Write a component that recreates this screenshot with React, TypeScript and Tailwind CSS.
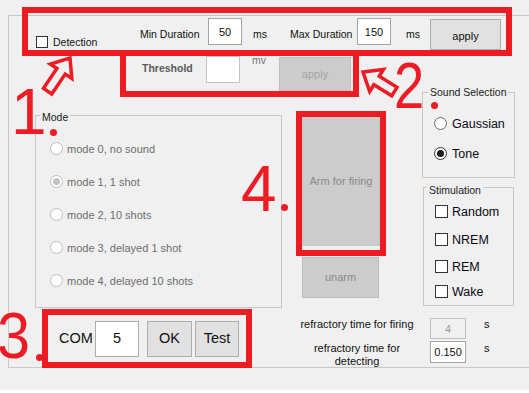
import { FC, ReactNode } from "react";

const RED = "bg-[#ed1c24]";

const Panel: FC<{ label: string; labelTop: string; labelLeft: string; className: string; children: ReactNode }> = ({ label, labelTop, labelLeft, className, children }) => (
    <div className={`relative border border-[#c6c6c6] ${className}`}>
        <span className={`absolute ${labelTop} ${labelLeft} px-[2px] bg-[#f0f0f0] text-[10.5px] leading-[12px] text-[#1a1a1a]`}>{label}</span>
        {children}
    </div>
);

const ModeRadio: FC<{ text: string; checked?: boolean }> = ({ text, checked }) => (
    <div className="flex items-center gap-[4px] h-[13px]">
        <span className="w-[13px] h-[13px] rounded-full border border-[#bcbcbc] bg-white flex items-center justify-center">
            {checked && <span className="w-[7px] h-[7px] rounded-full bg-[#c2c2c2]" />}
        </span>
        <span className="text-[11px] leading-[12px] text-[#6d6d6d]">{text}</span>
    </div>
);

const Check: FC<{ text: string; className?: string }> = ({ text, className }) => (
    <div className={`flex items-center gap-[4px] h-[13px] ${className ?? ""}`}>
        <span className="w-[13px] h-[13px] border border-[#333] bg-white" />
        <span className="text-[12.5px] leading-[14px] text-[#0a0a14]">{text}</span>
    </div>
);

export default function App() {
    return (
        <div className="w-[529px] h-[393px] bg-white overflow-hidden relative font-['Liberation_Sans',Arial,sans-serif]">
            <div className="h-[390px] bg-[#f0f0f0] pl-[8px] pt-[15px]">
                <div className="w-[530px] h-[353px] border border-r-0 border-[#c8c8c8] overflow-hidden">
                    {/* top row */}
                    <div className="flex items-start h-[34px] text-[10.5px] leading-[12px] text-[#111]">
                        <div className="ml-[27px] mt-[20px] w-[104px] flex items-center gap-[5px]">
                            <span className="w-[12px] h-[12px] border border-[#333] bg-white" />
                            <span>Detection</span>
                        </div>
                        <span className="mt-[12px] w-[68px]">Min Duration</span>
                        <div className="mt-[2px] w-[34px] h-[27px] border border-[#a5a5a5] bg-white flex items-center justify-center text-[11px]">50</div>
                        <span className="mt-[12px] ml-[11px] w-[37px]">ms</span>
                        <span className="mt-[12px] w-[67px]">Max Duration</span>
                        <div className="mt-[2px] w-[34px] h-[27px] border border-[#a5a5a5] bg-white flex items-center justify-center text-[11px]">150</div>
                        <span className="mt-[12px] ml-[15px] w-[24px]">ms</span>
                        <div className="mt-[3px] w-[71px] h-[31px] bg-[#e1e1e1] border border-[#adadad] flex items-center justify-center pt-[3px] text-[11px]">apply</div>
                    </div>

                    {/* threshold row */}
                    <div className="flex items-start h-[41px]">
                        <span className="ml-[133px] mt-[12px] w-[64px] text-[10.5px] leading-[12px] font-bold text-[#5a5a5a]">Threshold</span>
                        <div className="mt-[6px] w-[34px] h-[27px] border border-[#c4c4c4] bg-white" />
                        <span className="ml-[12px] mt-[4px] w-[27px] text-[10.5px] leading-[12px] text-[#777]">mv</span>
                        <div className="mt-[7px] w-[72px] h-[34px] bg-[#cccccc] border border-[#bfbfbf] flex items-center justify-center text-[11px] text-[#a3a3a3]">apply</div>
                    </div>

                    {/* body */}
                    <div className="flex items-start">
                        <div className="ml-[26px] mt-[24px] w-[247px]">
                            <Panel label="Mode" labelTop="-top-[5px]" labelLeft="left-[4px]" className="h-[193px]">
                                <div className="pt-[26px] pl-[14px] flex flex-col gap-[20px]">
                                    <ModeRadio text="mode 0, no sound" />
                                    <ModeRadio text="mode 1, 1 shot" checked />
                                    <ModeRadio text="mode 2, 10 shots" />
                                    <ModeRadio text="mode 3, delayed 1 shot" />
                                    <ModeRadio text="mode 4, delayed 10 shots" />
                                </div>
                            </Panel>
                            <div className="mt-[13px] pl-[24px] flex items-center h-[36px] text-[14.5px] text-[#111]">
                                <span className="w-[36px]">COM</span>
                                <div className="w-[44px] h-[36px] border border-[#adadad] bg-white flex items-center justify-center">5</div>
                                <div className="ml-[8px] w-[45px] h-[36px] bg-[#e1e1e1] border border-[#adadad] flex items-center justify-center">OK</div>
                                <div className="ml-[3px] w-[44px] h-[36px] bg-[#e1e1e1] border border-[#adadad] flex items-center justify-center">Test</div>
                            </div>
                        </div>

                        <div className="ml-[20px] flex flex-col">
                            <div className="flex items-start">
                                <div className="flex flex-col w-[78px] text-[11px] text-[#8a8a8a]">
                                    <div className="mt-[25px] w-[78px] h-[130px] bg-[#cccccc] border border-[#c4c4c4] flex items-center justify-center">Arm for firing</div>
                                    <div className="mt-[11px] w-[77px] h-[41px] bg-[#cccccc] border border-[#bdbdbd] flex items-center justify-center">unarm</div>
                                </div>
                                <div className="ml-[42px] mt-[1px] flex flex-col">
                                    <Panel label="Sound Selection" labelTop="-top-[7px]" labelLeft="left-[5px]" className="w-[93px] h-[86px]">
                                        <div className="pt-[24px] pl-[11px] flex flex-col gap-[17px] text-[12.5px] leading-[14px] text-[#0a0a14]">
                                            <div className="flex items-center gap-[5px] h-[13px]">
                                                <span className="w-[13px] h-[13px] rounded-full border border-[#6a6a6a] bg-white" />
                                                <span>Gaussian</span>
                                            </div>
                                            <div className="flex items-center gap-[5px] h-[13px]">
                                                <span className="w-[13px] h-[13px] rounded-full border border-[#333] bg-white flex items-center justify-center">
                                                    <span className="w-[7px] h-[7px] rounded-full bg-[#1a1a1a]" />
                                                </span>
                                                <span>Tone</span>
                                            </div>
                                        </div>
                                    </Panel>
                                    <Panel label="Stimulation" labelTop="-top-[4px]" labelLeft="left-[3px]" className="ml-[1px] mt-[9px] w-[91px] h-[119px]">
                                        <div className="pt-[17px] pl-[11px] flex flex-col">
                                            <Check text="Random" />
                                            <Check text="NREM" className="mt-[15px]" />
                                            <Check text="REM" className="mt-[14px]" />
                                            <Check text="Wake" className="mt-[12px]" />
                                        </div>
                                    </Panel>
                                </div>
                            </div>

                            <div className="mt-[12px] -ml-[5px] text-[11px] leading-[12px] text-[#111]">
                                <div className="flex items-start">
                                    <span className="w-[120px] text-center">refractory time for firing</span>
                                    <div className="ml-[13px] w-[36px] h-[21px] border border-[#c0c0c0] bg-[#f0f0f0] text-[#9a9a9a] flex items-center justify-center">4</div>
                                    <span className="ml-[18px]">s</span>
                                </div>
                                <div className="mt-[2px] flex items-start">
                                    <span className="mt-[1px] w-[120px] text-center leading-[13px]">refractory time for detecting</span>
                                    <div className="ml-[13px] w-[36px] h-[22px] border border-[#a5a5a5] bg-white flex items-center justify-center">0.150</div>
                                    <span className="ml-[18px] mt-[1px]">s</span>
                                </div>
                            </div>
                        </div>
                    </div>
                </div>
            </div>

            {/* annotations */}
            <div className="absolute inset-0 pointer-events-none">
                <div className="absolute left-[22px] top-[7px] w-[490px] h-[49px] border-[6px] border-[#ed1c24]" />
                <div className="absolute left-[120px] top-[50px] w-[239px] h-[47px] border-[6px] border-[#ed1c24]" />
                <div className="absolute left-[42px] top-[309px] w-[210px] h-[59px] border-[6px] border-[#ed1c24]" />
                <div className="absolute left-[296px] top-[111px] w-[90px] h-[145px] border-[6px] border-[#ed1c24]" />

                <span className="absolute left-[11px] top-[80px] text-[64px] leading-none text-[#ed1c24]">1</span>
                <span className="absolute left-[394px] top-[54px] text-[64px] leading-none text-[#ed1c24] scale-x-[0.85] origin-left">2</span>
                <span className="absolute left-[-3px] top-[304px] text-[64px] leading-none text-[#ed1c24] scale-x-[0.93] origin-left">3</span>
                <span className="absolute left-[241px] top-[157px] text-[64px] leading-none text-[#ed1c24]">4</span>

                <span className={`absolute left-[50px] top-[129px] w-[7px] h-[7px] rounded-full ${RED}`} />
                <span className={`absolute left-[431px] top-[102px] w-[7px] h-[7px] rounded-full ${RED}`} />
                <span className={`absolute left-[36px] top-[354px] w-[7px] h-[7px] rounded-full ${RED}`} />
                <span className={`absolute left-[281px] top-[204px] w-[7px] h-[7px] rounded-full ${RED}`} />

                <svg className="absolute left-0 top-0" width="529" height="393" viewBox="0 0 529 393">
                    <g transform="translate(70 58) rotate(34)" fill="none" stroke="#ed1c24" strokeWidth="3.5" strokeLinejoin="miter">
                        <path d="M0 0 L13 16 L5 16 L5 40 L-5 40 L-5 16 L-13 16 Z" />
                    </g>
                    <g transform="translate(363 72) rotate(-58)" fill="none" stroke="#ed1c24" strokeWidth="3.5" strokeLinejoin="miter">
                        <path d="M0 0 L13 16 L5 16 L5 37 L-5 37 L-5 16 L-13 16 Z" />
                    </g>
                </svg>
            </div>
        </div>
    );
}
